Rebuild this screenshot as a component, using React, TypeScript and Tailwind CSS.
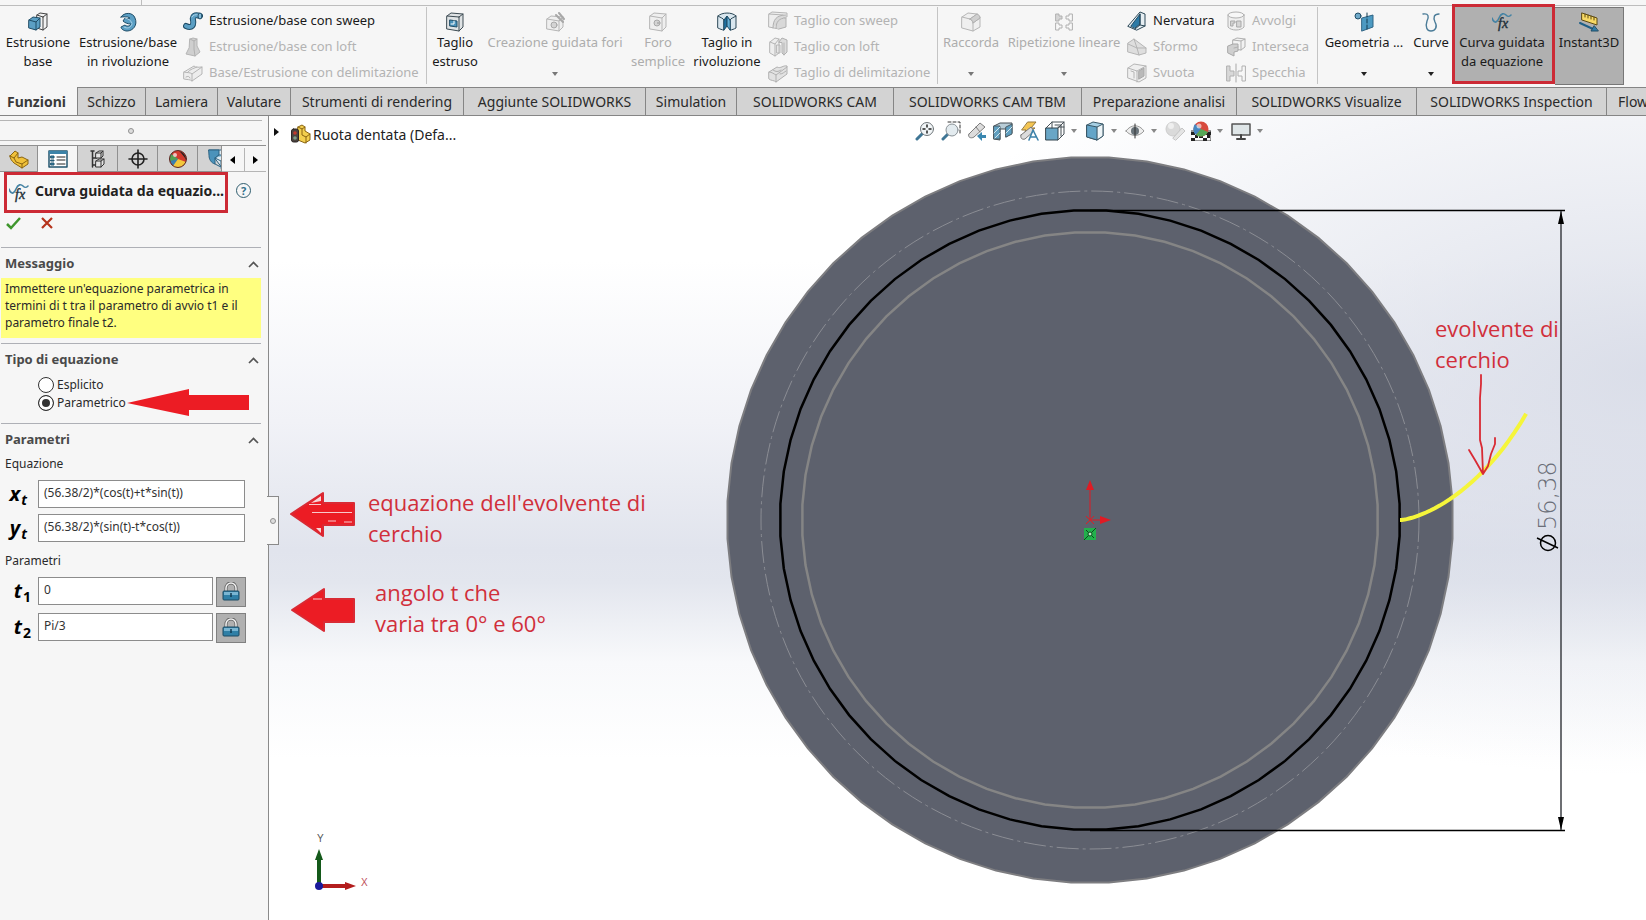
import { useState, type ReactNode } from "react";

type IconProps = { off?: boolean };
type IconType = (props: IconProps) => ReactNode;

const Svg = ({ children, size = 20 }: { children: ReactNode; size?: number }) => (
  <svg
    width={size}
    height={size}
    viewBox="0 0 20 20"
    fill="none"
    strokeLinejoin="round"
    strokeLinecap="round"
    className="shrink-0"
    aria-hidden="true"
  >
    {children}
  </svg>
);

// ribbon icons
const ExtrudeIcon = () => (
  <Svg>
    <path d="M9 3l3-2 7 1v13l-4 3-6-2z" fill="#f2f2f2" stroke="#444" />
    <path d="M15 5l4-3M15 5v13M9 3l6 2" stroke="#444" />
    <path d="M1 8l4-3 7 1v9l-4 3-7-2z" fill="#5b9fc4" stroke="#1f4c66" />
    <path d="M1 8l7 2 4-4M8 10v8" stroke="#1f4c66" />
  </Svg>
);
const RevolveIcon = () => (
  <Svg>
    <path
      d="M3 5c3-5 12-5 14 1 3 7-2 13-8 13-3 0-6-2-6-4l4-2c2 2 5 1 6-1-3 0-6-1-8-3l2-3c2 1 4 1 5 0-3-2-6-1-9-1z"
      fill="#5b9fc4"
      stroke="#1f4c66"
    />
    <path d="M7 6c3 1 6 2 7 5M6 15c3 2 7 1 8-3" stroke="#a9d0e5" />
  </Svg>
);
const SweepIcon = () => (
  <Svg>
    <path d="M3 15c6 3 8-1 7-6-1-4 2-6 7-4" stroke="#1f4c66" strokeWidth="6" />
    <path d="M3 15c6 3 8-1 7-6-1-4 2-6 7-4" stroke="#5b9fc4" strokeWidth="4" />
    <path d="M9 6c1-2 4-3 6-2" stroke="#a9d0e5" />
    <ellipse cx="17" cy="5" rx="2" ry="3" fill="#87bedb" stroke="#1f4c66" />
  </Svg>
);
const LoftIcon = () => (
  <Svg>
    <path d="M7 2l3-1 4 1v7l3 6-5 4-9-2 3-6z" fill="#cfcfcf" stroke="#b5b5b5" />
    <path d="M7 2l4 2 3-2M11 4v8l1 7" stroke="#b0b0b0" />
  </Svg>
);
const BoundaryIcon = () => (
  <Svg>
    <path d="M1 9l10-6c2 2 5 1 8 1v7L9 18c-2-2-5-1-8-2z" fill="#ededed" stroke="#b5b5b5" />
    <path d="M1 9c3 1 6 0 8 2l10-7M9 11v7M5 9c2-3 7-4 9-5M3 14c2-1 3-1 4 1" stroke="#b5b5b5" />
  </Svg>
);
const CutExtrudeIcon = () => (
  <Svg>
    <path d="M2 4l4-3 12 1v13l-4 4-12-2z" fill="#dfe3e5" stroke="#3c4a52" />
    <path d="M14 5l4-3M14 5v14M2 4l12 1" stroke="#3c4a52" />
    <path d="M5 8l7 1v6l-7-1z" fill="#4b93bb" stroke="#1f4c66" />
    <path d="M9 9v3H6" stroke="#fff" />
  </Svg>
);
const HoleWizardIcon = () => (
  <Svg>
    <path d="M2 7l4-3 12 1v10l-4 4-12-2z" fill="#efefef" stroke="#b5b5b5" />
    <path d="M2 7l12 2 4-4M14 9v10" stroke="#b5b5b5" />
    <circle cx="9" cy="13" r="3" fill="#d4d4d4" stroke="#a8a8a8" />
    <path d="M11 3l7 7M14 1l5 6" stroke="#a8a8a8" strokeWidth="2" />
  </Svg>
);
const HoleIcon = () => (
  <Svg>
    <path d="M2 4l4-3 12 1v13l-4 4-12-2z" fill="#efefef" stroke="#b5b5b5" />
    <path d="M2 4l12 2 4-4M14 6v13" stroke="#b5b5b5" />
    <circle cx="9" cy="11" r="3" fill="#d4d4d4" stroke="#a8a8a8" />
    <circle cx="10" cy="11" r="1" fill="#aaa" />
  </Svg>
);
const CutRevolveIcon = () => (
  <Svg>
    <path d="M1 4c4-4 14-4 18 0v12c-2 1-4 2-6 2V8l-3-3-3 3v10c-2 0-4-1-6-2z" fill="#d9e6ee" stroke="#2b4756" />
    <path d="M7 8l3-4v10l-3 4z" fill="#1f6f9e" stroke="#1f4c66" />
    <path d="M13 8l-3-4v10l3 4z" fill="#63afd6" stroke="#1f4c66" />
    <path d="M1 4c3 2 5 2 6 4M19 4c-3 2-5 2-6 4" stroke="#2b4756" />
  </Svg>
);
const CutSweepIcon = () => (
  <Svg>
    <path d="M1 3l3-2 15 1v4c-6 0-8 3-8 12l-10-2z" fill="#ededed" stroke="#b5b5b5" />
    <path d="M5 17c0-8 3-13 13-13M8 17c0-6 3-10 10-10v9l-7 2" fill="#d8d8d8" stroke="#b0b0b0" />
    <path d="M1 3l14 1" stroke="#b5b5b5" />
  </Svg>
);
const CutLoftIcon = () => (
  <Svg>
    <path d="M2 5l5-4 4 1v14l-4 3-5-3z" fill="#ededed" stroke="#b5b5b5" />
    <path d="M11 5l3-4 5 2v12l-3 3-2-2V6z" fill="#dcdcdc" stroke="#b0b0b0" />
    <path d="M2 5l5 2 4-5M7 7v12M9 8h3v8H9zM16 6v12" stroke="#b5b5b5" />
  </Svg>
);
const CutBoundaryIcon = () => (
  <Svg>
    <path d="M1 9l8-5c4 2 6-2 10-1v8L8 19c-2-2-5-1-7-3z" fill="#e2e2e2" stroke="#b0b0b0" />
    <path d="M1 9c3 0 5 2 7 3L19 4M8 12v7M5 7c3 2 5 2 8 0M12 11c3 0 4-2 6-3" stroke="#b0b0b0" />
  </Svg>
);
const FilletIcon = () => (
  <Svg>
    <path d="M1 5l6-4 9 1c2 1 3 3 3 5v8l-7 4-11-3z" fill="#efefef" stroke="#b5b5b5" />
    <path d="M1 5l8 2c2 1 3 3 3 5v7M9 7l7-5M12 11l7-5" stroke="#b5b5b5" />
    <path d="M9 7l7-5c2 1 3 2 3 4l-7 5c0-2-1-3-3-4z" fill="#cfcfcf" stroke="#b0b0b0" />
  </Svg>
);
const PatternIcon = () => (
  <Svg>
    {/* two bosses facing each other, repeated on both rows */}
    {["M2 2h3v2h3v3H5v2H2z", "M18 2h-3v2h-3v3h3v2h3z", "M2 11h3v2h3v3H5v2H2z", "M18 11h-3v2h-3v3h3v2h3z"].map((d, i) => (
      <path key={d} d={d} fill={i === 0 ? "#d5d5d5" : "#f7f7f7"} stroke="#b0b0b0" />
    ))}
  </Svg>
);
const RibIcon = () => (
  <Svg>
    <path d="M1 15L13 1l5 2v12l-8 4z" fill="#e6eef2" stroke="#2b4756" />
    <path d="M4 15L13 3v10l-5 4z" fill="#2d7ba6" stroke="#1f4c66" />
    <path d="M13 3v11l5 1M13 14l-5 4" stroke="#2b4756" />
  </Svg>
);
const DraftIcon = () => (
  <Svg>
    <path d="M1 6l6-4 12 9v5l-7 2-11-3z" fill="#dedede" stroke="#b5b5b5" />
    <path d="M1 7l9 4 9 0M10 11l2 7M10 11L7 2" stroke="#b5b5b5" />
  </Svg>
);
const ShellIcon = () => (
  <Svg>
    <path d="M1 5l6-4 12 2v12l-7 4-11-4z" fill="#efefef" stroke="#b5b5b5" />
    <path d="M1 5l9 3v11M10 8l9-5" stroke="#b5b5b5" />
    <path d="M12 8l5-3v8l-5 3z" fill="#b9b9b9" stroke="#a8a8a8" />
    <path d="M4 8l3 1v6" stroke="#b5b5b5" />
  </Svg>
);
const WrapIcon = () => (
  <Svg>
    <path d="M2 4v12c3 4 13 4 16 0V4" fill="#efefef" stroke="#b0b0b0" />
    <ellipse cx="10" cy="4" rx="8" ry="3" fill="#f7f7f7" stroke="#b0b0b0" />
    <path d="M5 10h4v2H7v3H5zM11 10h4v6h-4z" fill="#d5d5d5" stroke="#a8a8a8" />
  </Svg>
);
const IntersectIcon = () => (
  <Svg>
    <path d="M7 3l4-2 8 1v8l-4 3-8-1z" fill="#f2f2f2" stroke="#b0b0b0" />
    <path d="M2 9l5-2h5v7l-4 1v4l-6-3z" fill="#cfcfcf" stroke="#a8a8a8" />
    <path d="M7 3l8 1 4-2M15 4v9M8 11l4-1" stroke="#b0b0b0" />
  </Svg>
);
const MirrorIcon = () => (
  <Svg>
    <path d="M1 3h3v5h4v5H4v5H1z" fill="#d8d8d8" stroke="#b0b0b0" />
    <path d="M19 3h-3v5h-4v5h4v5h3z" fill="#f7f7f7" stroke="#b0b0b0" />
    <path d="M10 1v18" stroke="#a8a8a8" />
  </Svg>
);
const GeometryIcon = () => (
  <Svg>
    <circle cx="4" cy="4" r="3" fill="#6fa9c9" stroke="#1f4c66" />
    <path d="M8 6l11-3v12L8 19z" fill="#4d9ac2" stroke="#2f6484" />
    <path d="M13 1v18" stroke="#123a50" strokeDasharray="4 2" />
  </Svg>
);
const CurvesIcon = () => (
  <Svg>
    <path d="M2 2c6-1 6 3 4 7-2 6 0 10 4 10s7-4 4-9c-2-5-1-8 4-8" stroke="#4b7c98" strokeWidth="1.4" />
  </Svg>
);
const FxIcon = () => (
  <Svg>
    <path d="M0 6c2 6 5 5 7 0s5-5 7-3 3 2 5 0" stroke="#4583a4" strokeWidth="1.6" />
    <text x="6" y="16" fontSize="14" fontStyle="italic" fontFamily="Liberation Serif, serif" fill="#22313a" stroke="#22313a" strokeWidth="0.4">
      fx
    </text>
  </Svg>
);
const InstantIcon = () => (
  <Svg>
    <path d="M3 1l15 5v7L3 8z" fill="#f7d965" stroke="#5d4a12" />
    <path d="M6 2v3M9 3v3M12 4v3M15 5v3" stroke="#5d4a12" />
    <path d="M1 11l13 6" stroke="#1f5f86" strokeWidth="2" />
    <path d="M19 19l-7 0 3-5z" fill="#2f7ca8" stroke="#1f4c66" />
  </Svg>
);

const Caret = ({ color = "#222" }: { color?: string }) => (
  <svg width="6" height="4" viewBox="0 0 6 4" aria-hidden="true">
    <path d="M0 0h6L3 4z" fill={color} />
  </svg>
);

type Command = {
  lines: string[];
  icon: IconType;
  width: string;
  off?: boolean;
  menu?: boolean;
};

const BigButton = ({ lines, icon: Icon, width, off, menu }: Command) => (
  <button
    disabled={off}
    className={`${width} shrink-0 flex flex-col items-center pt-[6px] ${off ? "text-[#adadad]" : "text-[#1a1a1a]"}`}
  >
    <Icon />
    <span className="mt-px text-[13px] leading-[19px] whitespace-nowrap">
      {lines.map((line) => (
        <span key={line} className="block">
          {line}
        </span>
      ))}
    </span>
    {menu && (
      <span className="mt-5">
        <Caret color={off ? "#777" : "#222"} />
      </span>
    )}
  </button>
);

type Small = { label: string; icon: IconType; off?: boolean };

const SmallList = ({ items, width }: { items: Small[]; width: string }) => (
  <div className={`${width} shrink-0 flex flex-col pt-[2px] pl-[3px]`}>
    {items.map(({ label, icon: Icon, off }) => (
      <button
        key={label}
        disabled={off}
        className={`h-[26px] flex items-center gap-[6px] text-[13px] whitespace-nowrap ${off ? "text-[#b3b3b3]" : "text-[#1a1a1a]"}`}
      >
        <Icon />
        {label}
      </button>
    ))}
  </div>
);

const Divider = () => <div className="w-px -ml-px h-[77px] mt-px bg-[#c4c4c4] shrink-0" />;

const Ribbon = () => (
  <div className="flex h-[81px]">
    <BigButton lines={["Estrusione", "base"]} icon={ExtrudeIcon} width="w-[76px]" />
    <BigButton lines={["Estrusione/base", "in rivoluzione"]} icon={RevolveIcon} width="w-[104px]" />
    <SmallList
      width="w-[247px]"
      items={[
        { label: "Estrusione/base con sweep", icon: SweepIcon },
        { label: "Estrusione/base con loft", icon: LoftIcon, off: true },
        { label: "Base/Estrusione con delimitazione", icon: BoundaryIcon, off: true },
      ]}
    />
    <Divider />
    <BigButton lines={["Taglio", "estruso"]} icon={CutExtrudeIcon} width="w-[56px]" />
    <BigButton lines={["Creazione guidata fori"]} icon={HoleWizardIcon} width="w-[144px]" off menu />
    <BigButton lines={["Foro", "semplice"]} icon={HoleIcon} width="w-[62px]" off />
    <BigButton lines={["Taglio in", "rivoluzione"]} icon={CutRevolveIcon} width="w-[76px]" />
    <SmallList
      width="w-[173px]"
      items={[
        { label: "Taglio con sweep", icon: CutSweepIcon, off: true },
        { label: "Taglio con loft", icon: CutLoftIcon, off: true },
        { label: "Taglio di delimitazione", icon: CutBoundaryIcon, off: true },
      ]}
    />
    <Divider />
    <BigButton lines={["Raccorda"]} icon={FilletIcon} width="w-[66px]" off menu />
    <BigButton lines={["Ripetizione lineare"]} icon={PatternIcon} width="w-[120px]" off menu />
    <SmallList
      width="w-[99px]"
      items={[
        { label: "Nervatura", icon: RibIcon },
        { label: "Sformo", icon: DraftIcon, off: true },
        { label: "Svuota", icon: ShellIcon, off: true },
      ]}
    />
    <SmallList
      width="w-[95px]"
      items={[
        { label: "Avvolgi", icon: WrapIcon, off: true },
        { label: "Interseca", icon: IntersectIcon, off: true },
        { label: "Specchia", icon: MirrorIcon, off: true },
      ]}
    />
    <Divider />
    <BigButton lines={["Geometria ..."]} icon={GeometryIcon} width="w-[92px]" menu />
    <BigButton lines={["Curve"]} icon={CurvesIcon} width="w-[42px]" menu />
    <div className="relative flex bg-[#b0b0b0] mt-px mb-[3px] pr-[3px]">
      <div className="flex -mt-px">
        <BigButton lines={["Curva guidata", "da equazione"]} icon={FxIcon} width="w-[100px]" />
      </div>
      <div className="absolute inset-x-0 -top-[3px] bottom-0 border-[3px] border-[#cc2a35]" />
    </div>
    <div className="flex bg-[#b0b0b0] mt-px mb-[2px] border border-l-0 border-[#777]">
      <div className="flex -mt-[2px]">
        <BigButton lines={["Instant3D"]} icon={InstantIcon} width="w-[68px]" />
      </div>
    </div>
  </div>
);

const tabs = [
  { label: "Funzioni", width: "w-[78px]" },
  { label: "Schizzo", width: "w-[68px]" },
  { label: "Lamiera", width: "w-[72px]" },
  { label: "Valutare", width: "w-[73px]" },
  { label: "Strumenti di rendering", width: "w-[173px]" },
  { label: "Aggiunte SOLIDWORKS", width: "w-[182px]" },
  { label: "Simulation", width: "w-[91px]" },
  { label: "SOLIDWORKS CAM", width: "w-[157px]" },
  { label: "SOLIDWORKS CAM TBM", width: "w-[188px]" },
  { label: "Preparazione analisi", width: "w-[155px]" },
  { label: "SOLIDWORKS Visualize", width: "w-[180px]" },
  { label: "SOLIDWORKS Inspection", width: "w-[190px]" },
];

const TabBar = () => (
  <nav className="flex h-[29px] overflow-hidden border-b border-[#858585] text-[14px] text-[#2a2a2a]">
    {tabs.map(({ label, width }, idx) => (
      <button
        key={label}
        className={`${width} shrink-0 whitespace-nowrap border-r border-[#858585] ${
          idx === 0 ? "font-bold text-[#3a3a3a] pr-1" : "border-t bg-[#d3d3d3]"
        }`}
      >
        {label}
      </button>
    ))}
    <button className="grow shrink-0 basis-0 pl-[11px] border-t border-[#858585] bg-[#d3d3d3] text-left whitespace-nowrap">
      Flow
    </button>
  </nav>
);

// property manager tabs
const PartIcon = () => (
  <Svg>
    <path d="M1 7l5-5 3 2v5l4-1 6 3v4l-6 4L5 14c-2-2-4-4-4-7z" fill="#f0c13a" stroke="#8a6512" />
    <path d="M1 7l4 2 4-5M5 9l2 4 6 2 6-4M13 15v4" stroke="#8a6512" />
  </Svg>
);
const PropertyIcon = () => (
  <Svg>
    <path d="M1 2h18v16H1z" fill="#fff" stroke="#23566f" strokeWidth="1.5" />
    <path d="M1 2h18v3H1z" fill="#3c83a8" />
    <path d="M9 8h8M9 11h8M9 15h8" stroke="#222" />
    <path d="M3 7h3v2H3zM3 11h3v1H3zM3 14h3v2H3z" fill="#3c83a8" stroke="#23566f" />
  </Svg>
);
const ConfigIcon = () => (
  <Svg>
    <path d="M3 2h3M4.500 2v16M4.500 9h4M4.500 16h4" stroke="#333" strokeWidth="1.5" />
    <path d="M8 4l3-2h4v5l-2 2H8zM8 12l3-2h5v5l-3 3H8z" fill="#e4e4e4" stroke="#333" />
    <path d="M8 4h5v5M13 4l2-2M8 12h5v6M13 12l3-2" stroke="#333" />
  </Svg>
);
const TargetIcon = () => (
  <Svg>
    <circle cx="10" cy="10" r="6" stroke="#222" strokeWidth="1.6" />
    <path d="M10 1v18M1 10h18" stroke="#222" strokeWidth="1.6" />
  </Svg>
);
const AppearanceIcon = () => (
  <Svg>
    <circle cx="10" cy="10" r="8.5" fill="#d23a2e" />
    <path d="M10 10L3 5a9 9 0 0 0 3 12z" fill="#3b7fb0" />
    <path d="M10 10L5 17a9 9 0 0 0 13-4z" fill="#f3c73c" />
    <path d="M10 10L3 5a9 9 0 0 0 -1 7z" fill="#55a052" />
    <path d="M11 2c3 3 5 5 7 9a9 9 0 0 0-7-9z" fill="#222" />
    <circle cx="10" cy="10" r="8.5" stroke="#5b2a24" />
    <circle cx="7" cy="6" r="2" fill="#fff" opacity=".7" />
  </Svg>
);
const CamIcon = () => (
  <Svg>
    <path d="M1 1h18v16h-6z" fill="#dfeaf0" stroke="#2d6382" />
    <path d="M1 1h10v5l-4 3v6c-4-1-6-5-6-8z" fill="#4b93bb" stroke="#2d6382" />
    <path d="M7 9l4-3h8M7 9l6 3M7 15l6 3v-6l6-4v7l-6 4" fill="#8cc1dc" stroke="#2d6382" />
  </Svg>
);

const managerTabs: { name: string; icon: IconType; width: string }[] = [
  { name: "FeatureManager", icon: PartIcon, width: "w-[38px]" },
  { name: "PropertyManager", icon: PropertyIcon, width: "w-[40px]" },
  { name: "ConfigurationManager", icon: ConfigIcon, width: "w-[40px]" },
  { name: "DimXpertManager", icon: TargetIcon, width: "w-[40px]" },
  { name: "DisplayManager", icon: AppearanceIcon, width: "w-[40px]" },
  { name: "CAM", icon: CamIcon, width: "w-[24px] pl-[10px]" },
];

const ManagerTabs = () => (
  <div className="flex mt-1 mr-[2px] h-[27px] border-t border-[#909090]">
    {managerTabs.map(({ name, icon: Icon, width }, idx) => (
      <button
        key={name}
        aria-label={name}
        className={`${width} shrink-0 overflow-hidden flex items-center border-r border-[#909090] ${
          idx === 5 ? "justify-start" : "justify-center"
        } ${idx === 1 ? "bg-[#f6f6f6]" : "bg-[#d3d3d3] border-b"}`}
      >
        <Icon />
      </button>
    ))}
    <button aria-label="Indietro" className="grow mt-[2px] border-b border-r border-[#b5b5b5] flex items-center justify-center">
      <svg width="5" height="8" viewBox="0 0 5 8">
        <path d="M5 0v8L0 4z" fill="#000" />
      </svg>
    </button>
    <button aria-label="Avanti" className="grow mt-[2px] border-b border-[#b5b5b5] flex items-center justify-center">
      <svg width="5" height="8" viewBox="0 0 5 8">
        <path d="M0 0v8l5-4z" fill="#000" />
      </svg>
    </button>
  </div>
);

const SectionTitle = ({ children }: { children: ReactNode }) => (
  <button className="w-full flex items-center justify-between pl-1 pr-[2px] h-[31px] pt-[2px] border-t border-[#aeb0b6] text-[13px] font-bold text-[#4a4a4a]">
    {children}
    <svg width="11" height="7" viewBox="0 0 11 7" fill="none" aria-hidden="true">
      <path d="M1 6l4.500-4.500L10 6" stroke="#555" strokeWidth="1.700" />
    </svg>
  </button>
);

const LockButton = ({ label }: { label: string }) => (
  <button aria-label={label} className="size-[30px] shrink-0 flex items-center justify-center bg-[#b0b0b0] border border-[#808080]">
    <svg width="18" height="20" viewBox="0 0 18 20" fill="none" aria-hidden="true">
      <path d="M4 10V6a5 5 0 0 1 10 0v4" stroke="#5c5c5c" strokeWidth="3" />
      <path d="M4 10V6a5 5 0 0 1 10 0v4" stroke="#f2f2f2" strokeWidth="1.500" />
      <rect x="1" y="9" width="16" height="9" rx="1" fill="#2f7fa6" stroke="#1d4b63" />
      <path d="M2 10h14v3H2z" fill="#79b5d2" />
      <path d="M9 11v4" stroke="#123a50" strokeWidth="1.500" />
    </svg>
  </button>
);

const Symbol = ({ id, base, sub }: { id: string; base: string; sub: string }) => (
  <label
    htmlFor={id}
    className={`w-[34px] h-7 shrink-0 flex items-baseline justify-end text-black font-bold text-[20px] leading-7 italic ${
      sub === "t" ? "pr-2" : "pr-1"
    }`}
  >
    {base}
    <span
      className={`relative top-1 pl-px text-[14px] leading-4 ${sub === "t" ? "" : "not-italic"}`}
    >
      {sub}
    </span>
  </label>
);

const inputStyle = "h-7 min-w-0 border border-[#8c8c8c] bg-white px-[5px] pb-1 text-[12px] text-[#333] outline-none";

const PropertyManager = () => {
  const [kind, setKind] = useState("Parametrico");
  const [values, setValues] = useState({
    x: "(56.38/2)*(cos(t)+t*sin(t))",
    y: "(56.38/2)*(sin(t)-t*cos(t))",
    t1: "0",
    t2: "Pi/3",
  });
  const set = (key: keyof typeof values, value: string) => setValues({ ...values, [key]: value });

  return (
    <aside className="relative w-[269px] shrink-0 bg-[#f6f6f6] border-r border-[#8a8a8a] text-[12px] text-[#2a2a2a]">
      <div className="mt-1 mr-[6px] h-[21px] border-y border-[#b5b5b5] flex items-center justify-center">
        <span className="size-[6px] rounded-full border border-[#909090] bg-[#ddd]" />
      </div>
      <ManagerTabs />

      <div className="flex items-center">
        <div className="ml-1 w-[224px] h-[41px] px-[2px] flex items-center gap-[6px] border-[3px] border-[#cc2a35]">
          <FxIcon />
          <h1 className="text-[14px] font-bold text-[#222] whitespace-nowrap -mt-1">Curva guidata da equazio...</h1>
        </div>
        <button
          aria-label="Guida"
          className="ml-2 mb-1 size-[15px] rounded-full border border-[#2f5d6e] text-[11px] leading-[12px] font-bold text-[#2f6f8a]"
        >
          ?
        </button>
      </div>
      <div className="flex items-center gap-5 h-[34px] pl-[6px] pb-[14px]">
        <button aria-label="OK">
          <svg width="15" height="13" viewBox="0 0 15 13" fill="none">
            <path d="M1 7l4 4 9-10" stroke="#3f962d" strokeWidth="2.500" />
          </svg>
        </button>
        <button aria-label="Annulla">
          <svg width="12" height="12" viewBox="0 0 12 12" fill="none">
            <path d="M1 1l10 10M11 1L1 11" stroke="#b5341c" strokeWidth="2.200" />
          </svg>
        </button>
      </div>

      <div className="pl-px pr-[7px]">
        <SectionTitle>Messaggio</SectionTitle>
        <p className="h-[60px] mb-[5px] pt-[2px] px-1 bg-[#ffff80] leading-[17px] whitespace-nowrap">
          Immettere un'equazione parametrica in
          <br />
          termini di t tra il parametro di avvio t1 e il
          <br />
          parametro finale t2.
        </p>

        <SectionTitle>Tipo di equazione</SectionTitle>
        <div className="relative h-[49px] pt-[2px] flex flex-col pl-[37px]">
          {["Esplicito", "Parametrico"].map((name) => (
            <label key={name} className="flex items-center gap-[3px] h-[18px]">
              <input
                type="radio"
                name="kind"
                checked={kind === name}
                onChange={() => setKind(name)}
                className="appearance-none size-4 rounded-full border border-[#333] bg-white checked:bg-[#333] checked:shadow-[inset_0_0_0_3px_#fff]"
              />
              {name}
            </label>
          ))}
          <svg width="123" height="28" viewBox="0 0 123 28" className="absolute left-[126px] top-[15px]" aria-hidden="true">
            <path d="M0 14L62 0v6h60v15H62v6z" fill="#ec1c24" />
          </svg>
        </div>

        <SectionTitle>Parametri</SectionTitle>
        <p className="pl-1 h-[26px] pt-[2px] leading-4">Equazione</p>
        <div className="flex flex-col gap-[6px] pr-4">
          <div className="flex gap-[3px] h-7">
            <Symbol id="xt" base="x" sub="t" />
            <input id="xt" className={`${inputStyle} grow`} value={values.x} onChange={(e) => set("x", e.target.value)} />
          </div>
          <div className="flex gap-[3px] h-7">
            <Symbol id="yt" base="y" sub="t" />
            <input id="yt" className={`${inputStyle} grow`} value={values.y} onChange={(e) => set("y", e.target.value)} />
          </div>
        </div>
        <p className="pl-1 h-[35px] pt-[10px] leading-[18px]">Parametri</p>
        <div className="flex flex-col gap-[6px] pr-[15px]">
          <div className="flex gap-[3px] h-[30px]">
            <Symbol id="t1" base="t" sub="1" />
            <input id="t1" className={`${inputStyle} grow`} value={values.t1} onChange={(e) => set("t1", e.target.value)} />
            <LockButton label="Blocca t1" />
          </div>
          <div className="flex gap-[3px] h-[30px]">
            <Symbol id="t2" base="t" sub="2" />
            <input id="t2" className={`${inputStyle} grow`} value={values.t2} onChange={(e) => set("t2", e.target.value)} />
            <LockButton label="Blocca t2" />
          </div>
        </div>
      </div>

      {/* splitter handle */}
      <div className="absolute left-full top-[380px] z-10 w-3 h-[49px] -ml-px bg-[#f6f6f6] border border-l-0 border-[#8a8a8a] flex items-center justify-center">
        <span className="size-[6px] rounded-full border border-[#909090] bg-[#ddd]" />
      </div>
    </aside>
  );
};

// view toolbar
const ZoomFitIcon = () => (
  <Svg>
    <path d="M2 18l6-6" stroke="#3f7695" strokeWidth="3" />
    <circle cx="12" cy="8" r="6.500" fill="#f1f5f7" stroke="#6d7478" />
    <path d="M12 4v2M12 10v2M8 8h2M14 8h2" stroke="#222" strokeWidth="1.500" />
  </Svg>
);
const ZoomAreaIcon = () => (
  <Svg>
    <path d="M2 18l5-5" stroke="#3f7695" strokeWidth="3" />
    <path d="M7 1h12v12" stroke="#333" strokeDasharray="3 2" />
    <circle cx="11" cy="9" r="6" fill="#e3ebef" stroke="#8a9297" />
  </Svg>
);
const PreviousViewIcon = () => (
  <Svg>
    <path d="M2 13L13 2l5 4L7 16c-3 2-7 0-5-3z" fill="#dcdcdc" stroke="#7d7d7d" />
    <path d="M9 6l4 5" stroke="#7d7d7d" />
    <path d="M10 15l5-4v3h4v3h-4v3z" fill="#3b87b0" />
  </Svg>
);
const SectionIcon = () => (
  <Svg>
    <path d="M1 5l6-3h12v10l-6 4V8H7v11l-6-1z" fill="#b9cdd7" stroke="#474f54" />
    <path d="M1 5h6v13H1zM13 6l6-3v10l-6 3z" fill="#5f9fc0" stroke="#4a5a63" />
    <path d="M1 12l6-6M2 17l5-5M13 12l6-6" stroke="#d4e6ef" />
  </Svg>
);
const AnnotationIcon = () => (
  <Svg>
    <path d="M9 1h8l-5 6h4L4 15l3-6H3z" fill="#f4c552" stroke="#94773a" />
    <path d="M2 14l10-8 3 4-9 8c-3 1-5-1-4-4z" fill="#dcdcdc" stroke="#777" />
    <path d="M10 19l4-10 5 10M12 16h5" stroke="#3d83ab" strokeWidth="1.600" />
  </Svg>
);
const OrientationIcon = () => (
  <Svg>
    <path d="M1 7h12v12H1z" fill="#69a6c6" stroke="#33444e" />
    <path d="M1 7l6-6h12v12l-6 6M13 7l6-6M7 1v6M19 6h-6M10 4h6v11" stroke="#454f55" />
  </Svg>
);
const DisplayIcon = () => (
  <Svg>
    <path d="M2 4l6-3 10 2v12l-6 4-10-3z" fill="#a7d0e4" stroke="#395767" />
    <path d="M12 6l6-3v12l-6 4z" fill="#eef5f8" stroke="#395767" />
    <path d="M2 4l10 2v13L2 16z" fill="#64a5c8" stroke="#395767" />
  </Svg>
);
const EyeIcon = () => (
  <Svg>
    <path d="M1 10c5-7 13-7 18 0-5 6-13 6-18 0z" fill="#eee" stroke="#999" />
    <circle cx="10" cy="10" r="4" fill="#69737a" />
    <path d="M10 3v14" stroke="#333" />
  </Svg>
);
const EditAppearanceIcon = () => (
  <Svg>
    <circle cx="8" cy="8" r="7" fill="#dadada" stroke="#cdcdcd" />
    <circle cx="6" cy="5" r="3" fill="#efefef" />
    <path d="M8 17l9-10 3 3-9 9z" fill="#e4e4e4" stroke="#c5c5c5" />
  </Svg>
);
const SceneIcon = () => (
  <Svg>
    <path d="M0 10h20v10H0z" fill="#fff" stroke="#333" />
    <path d="M0 11h4v3H0zM8 14h4v3H8zM4 14h3v3H4zM15 11h5v3h-5zM0 17h4v3H0zM12 17h4v3h-4zM16 14h3v3h-3z" fill="#222" />
    <circle cx="10" cy="8" r="7.500" fill="#d84a3d" />
    <path d="M10 8L4 3a8 8 0 0 0 1 11z" fill="#4787c0" />
    <path d="M10 8l-5 6a8 8 0 0 0 12-3z" fill="#57a957" />
    <circle cx="8" cy="5" r="2.500" fill="#fff" opacity=".6" />
  </Svg>
);
const MonitorIcon = () => (
  <Svg>
    <path d="M1 3h18v11H1z" fill="#dfe6e8" stroke="#555" strokeWidth="1.500" />
    <path d="M10 14v4M6 18h8" stroke="#444" strokeWidth="2" />
  </Svg>
);

const viewTools: { name: string; icon: IconType; menu?: boolean }[] = [
  { name: "Zoom adatto", icon: ZoomFitIcon },
  { name: "Zoom area", icon: ZoomAreaIcon },
  { name: "Vista precedente", icon: PreviousViewIcon },
  { name: "Vista in sezione", icon: SectionIcon },
  { name: "Viste annotazione", icon: AnnotationIcon },
  { name: "Orientamento vista", icon: OrientationIcon, menu: true },
  { name: "Stile visualizzazione", icon: DisplayIcon, menu: true },
  { name: "Nascondi/Mostra", icon: EyeIcon, menu: true },
  { name: "Modifica aspetto", icon: EditAppearanceIcon },
  { name: "Applica scena", icon: SceneIcon, menu: true },
  { name: "Impostazioni vista", icon: MonitorIcon, menu: true },
];

const ViewBar = () => (
  <div className="col-start-1 row-start-1 z-10 self-start flex items-center h-9">
    <div className="w-[646px] shrink-0 flex items-center pl-[5px] text-[14px] text-[#222]">
      <svg width="5" height="8" viewBox="0 0 5 8" className="-mt-1" aria-hidden="true">
        <path d="M0 0v8l5-4z" fill="#111" />
      </svg>
      <span className="ml-3 mr-[2px]">
        <Svg>
          <path d="M7 3l4-2 3 2v4l5 3v6l-5 3-7-3z" fill="#f3cf4f" stroke="#8a6512" />
          <path d="M7 3l4 2 3-2M11 5v6l4 2 4-3M15 13v6" stroke="#8a6512" />
          <rect x="0.500" y="5" width="7" height="13" rx="2" fill="#4a4340" stroke="#2c2624" />
          <circle cx="4" cy="9" r="1.800" fill="#c0392b" />
          <circle cx="4" cy="14" r="1.800" fill="#7f9c86" />
        </Svg>
      </span>
      <span>Ruota dentata (Defa...</span>
    </div>
    <div className="flex items-center gap-[6px] -mt-[6px]">
      {viewTools.map(({ name, icon: Icon, menu }) => (
        <button key={name} aria-label={name} className="flex items-center gap-[6px]">
          <Icon />
          {menu && (
            <span className="w-2">
              <Caret color="#888" />
            </span>
          )}
        </button>
      ))}
    </div>
  </div>
);

// centre of the gear and radius of its base circle on the sheet
const cx = 1090;
const cy = 520;
const baseRadius = 310;

const ring = (radius: number, sides: number) =>
  Array.from({ length: sides }, (_, i) => {
    const a = ((i + 0.5) / sides) * 2 * Math.PI;
    return `${(cx + radius * Math.cos(a)).toFixed(1)},${(cy + radius * Math.sin(a)).toFixed(1)}`;
  }).join(" ");

// x = r(cos t + t sin t), y = r(sin t - t cos t), t from 0 to pi/3
const involute = Array.from({ length: 31 }, (_, i) => {
  const t = (i / 30) * (Math.PI / 3);
  const x = cx + baseRadius * (Math.cos(t) + t * Math.sin(t));
  const y = cy - baseRadius * (Math.sin(t) - t * Math.cos(t));
  return `${x.toFixed(1)},${y.toFixed(1)}`;
}).join(" ");

const Drawing = () => (
  <svg viewBox="269 116 1377 804" preserveAspectRatio="xMinYMin meet" className="col-start-1 row-start-1 w-full" fill="none">
    <polygon points={ring(363, 60)} fill="#5d616d" stroke="#7d7d80" strokeWidth="2" />
    <circle cx={cx} cy={cy} r="329" stroke="#8b8d94" strokeDasharray="22 4 3 4" />
    <polygon points={ring(288, 60)} stroke="#858585" strokeWidth="2.500" />
    <polygon points={ring(baseRadius, 60)} stroke="#000" strokeWidth="2.500" />

    {/* diameter dimension */}
    <path d="M1090 210.500h475M1090 830.500h475" stroke="#000" strokeWidth="1.500" />
    <path d="M1561 211v619" stroke="#3c3f45" strokeWidth="1.500" />
    <path d="M1561 211l3 13h-6zM1561 830l3-13h-6z" fill="#000" />
    <circle cx="1548" cy="543" r="7.500" stroke="#000" strokeWidth="1.500" />
    <path d="M1537 538l21 10" stroke="#000" strokeWidth="1.500" />
    <text
      transform="translate(1556 530) rotate(-90)"
      fontFamily="DejaVu Sans, sans-serif"
      fontWeight="200"
      fontSize="24"
      fill="#6b6e78"
    >
      56,38
    </text>

    {/* sketch origin */}
    <path d="M1090 520v-36M1090 520h14M1086 516l8 8M1094 516l-8 8" stroke="#e01b24" />
    <path d="M1090 480l4 10h-8zM1111 520l-11 4v-8z" fill="#e01b24" />
    <path d="M1084 528h12v12h-12z" fill="#22b14c" />
    <path d="M1084 540l12-12M1086 530l8 8" stroke="#0a4a1c" />
    <circle cx="1090" cy="534" r="2" fill="#b6f0c4" stroke="#0a4a1c" />

    <polyline points={involute} stroke="#f5f53a" strokeWidth="4" />

    {/* triad */}
    <path d="M319 886v-28" stroke="#14591a" strokeWidth="4" />
    <path d="M319 849l4 11h-8z" fill="#14591a" />
    <path d="M319 886h28" stroke="#b31d1d" strokeWidth="4" />
    <path d="M356 886l-11 4v-8z" fill="#b31d1d" />
    <circle cx="319" cy="886" r="4" fill="#1a1a9c" />
    <g fontFamily="Liberation Sans, sans-serif" fontSize="10">
      <text x="317" y="842" fill="#555">Y</text>
      <text x="361" y="886" fill="#c0505a">X</text>
    </g>

    {/* red notes */}
    <g fill="#d12f3b" fontFamily="Open Sans, sans-serif" fontSize="22">
      <text x="368" y="511">equazione dell'evolvente di</text>
      <text x="368" y="542">cerchio</text>
      <text x="375" y="601">angolo t che</text>
      <text x="375" y="632">varia tra 0° e 60°</text>
      <text x="1435" y="337">evolvente di</text>
      <text x="1435" y="368">cerchio</text>
    </g>
    <g stroke="#d92a34" strokeLinejoin="round" strokeLinecap="round">
      <path d="M291 514l32-21v10h31v22h-31v11z" fill="#ec1c24" strokeWidth="2" />
      <path d="M292 610l32-21v10h30v23h-30v9z" fill="#ec1c24" strokeWidth="2" />
      <path
        d="M1481 375v9l-1 14v42l2 8 1 26M1469 450l6 10 8 14M1495 438v6l-4 10-3 12-5 8"
        strokeWidth="1.800"
      />
    </g>
    <path d="M311 503l10-7v5zM316 528h5v5z" fill="#f6d5d8" />
    <path d="M312 512.500h40M328 521h8M344 522h8M309 504.500h12M313 599h9" stroke="#f7c9cc" />
  </svg>
);

const App = () => (
  <div className="min-h-screen flex flex-col overflow-hidden bg-[#f6f6f6] font-['Noto_Sans','Open_Sans',sans-serif]">
    <header>
      <div className="h-[6px] border-b border-[#bdbdbd]">
        <div className="w-[142px] h-full border-r border-[#bdbdbd]" />
      </div>
      <Ribbon />
      <TabBar />
    </header>
    <div className="grow flex">
      <PropertyManager />
      <main className="grow min-w-0 grid bg-[radial-gradient(ellipse_55%_50%_at_100%_32%,rgba(214,218,230,0.85),rgba(214,218,230,0)),linear-gradient(to_bottom,#fff_18%,#f1f2f7_38%,#e1e4ed_54%,#e3e6ee_58%,#f8f9fb_68%,#fff_80%)]">
        <ViewBar />
        <Drawing />
      </main>
    </div>
  </div>
);

export default App;
